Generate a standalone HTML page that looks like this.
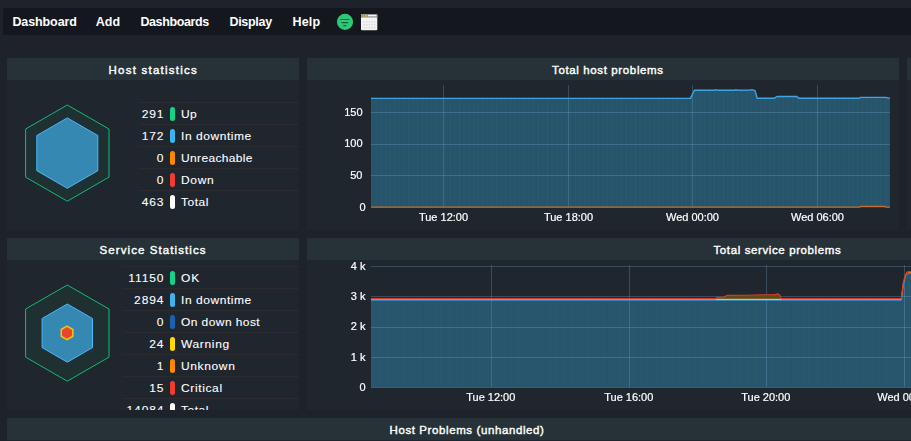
<!DOCTYPE html>
<html><head><meta charset="utf-8">
<style>
html,body{margin:0;padding:0;}
body{width:911px;height:441px;overflow:hidden;background:#1e222a;font-family:"Liberation Sans",sans-serif;color:#fff;position:relative;}
.abs{position:absolute;}
#nav{left:3px;top:8px;width:920px;height:27px;background:#14171d;border-radius:3px;}
#nav span{position:absolute;top:1px;margin-left:0.4px;line-height:27px;font-size:12.5px;font-weight:bold;white-space:nowrap;}
.panel{position:absolute;background:#20262e;overflow:hidden;}
.panel .hd{position:absolute;left:0;top:0;right:0;height:22px;background:#263238;}
.panel .hd span{position:absolute;top:0;line-height:25px;font-size:11.5px;font-weight:normal;-webkit-text-stroke:0.4px #fff;white-space:nowrap;}
.row{position:absolute;left:132px;right:0;height:22px;box-sizing:border-box;border-top:1px solid #2b2b30;font-size:12px;line-height:22px;letter-spacing:0.55px;}
.row .n{position:absolute;right:135.5px;top:0;text-align:right;}
.row .p{position:absolute;left:30.7px;top:4px;width:5.5px;height:14px;border-radius:2.75px;}
.row .l{position:absolute;left:42px;top:0;white-space:nowrap;}
.row .l,.row .n{transform:scaleY(0.92);transform-origin:0 15.5px;-webkit-text-stroke:0.1px #fff;}
.row .n{letter-spacing:0.9px;margin-right:-0.9px;}
.row.s{left:116px;}
.row.s .p{left:46.7px;}
.row.s .l{left:58px;}
svg text{font-family:"Liberation Sans",sans-serif;font-size:11px;fill:#fff;stroke:#fff;stroke-width:0.2px;}
svg.ch{will-change:transform;}
</style></head><body>
<div id="nav" class="abs">
<span style="left:9px;letter-spacing:-0.1px">Dashboard</span>
<span style="left:92.3px;letter-spacing:0.05px">Add</span>
<span style="left:137px;letter-spacing:-0.38px">Dashboards</span>
<span style="left:226px;letter-spacing:-0.28px">Display</span>
<span style="left:289px;letter-spacing:0.25px">Help</span>
<svg class="abs" style="left:333px;top:5px" width="18" height="18" viewBox="0 0 18 18"><circle cx="9" cy="8.9" r="8.05" fill="#2cc878"/><g stroke="#14603c" stroke-width="1.1" stroke-linecap="round"><line x1="4.7" x2="12.9" y1="6.5" y2="6.5"/><line x1="5.9" x2="11.8" y1="9.6" y2="9.6"/><line x1="7.8" x2="9.9" y1="12.6" y2="12.6"/></g></svg>
<svg class="abs" style="left:358px;top:6px" width="17" height="17" viewBox="0 0 17 17"><rect x="0" y="0" width="16.3" height="16.3" rx="1" fill="#f3f3f3"/><path d="M0,1 a1,1 0 0 1 1,-1 h14.3 a1,1 0 0 1 1,1 v2.5 h-16.3 z" fill="#8e8e8e"/><rect x="1.6" y="0.7" width="1.3" height="2" fill="#e6b422"/><rect x="3.9" y="0.7" width="2.3" height="2" fill="#e6b422"/><rect x="7" y="0.9" width="8.4" height="1.4" fill="#f4f4f4"/><g fill="#d6d6d6"><rect x="2.30" y="7.2" width="1.3" height="1.3"/><rect x="4.95" y="7.2" width="1.3" height="1.3"/><rect x="7.60" y="7.2" width="1.3" height="1.3"/><rect x="10.25" y="7.2" width="1.3" height="1.3"/><rect x="12.90" y="7.2" width="1.3" height="1.3"/><rect x="2.30" y="10.1" width="1.3" height="1.3"/><rect x="4.95" y="10.1" width="1.3" height="1.3"/><rect x="7.60" y="10.1" width="1.3" height="1.3"/><rect x="10.25" y="10.1" width="1.3" height="1.3"/><rect x="12.90" y="10.1" width="1.3" height="1.3"/><rect x="2.30" y="13" width="1.3" height="1.3"/><rect x="4.95" y="13" width="1.3" height="1.3"/><rect x="7.60" y="13" width="1.3" height="1.3"/><rect x="10.25" y="13" width="1.3" height="1.3"/><rect x="12.90" y="13" width="1.3" height="1.3"/></g></svg>
</div>

<!-- Host statistics -->
<div class="panel" style="left:7px;top:58px;width:292px;height:172px;">
<div class="hd"><span style="left:101.5px;letter-spacing:1.24px">Host statistics</span></div>
<svg class="abs" style="left:0;top:0" width="292" height="172">
<polygon points="60.3,47.0 102.0,71.0 102.0,119.1 60.3,143.2 18.6,119.1 18.6,71.0" fill="#1f3033" stroke="#16b877" stroke-width="1"/>
<polygon points="60.3,59.9 90.8,77.5 90.8,112.7 60.3,130.3 29.8,112.7 29.8,77.5" fill="#3488b2" stroke="#4bb8f5" stroke-width="1"/>
</svg>
<div class="row" style="top:44px"><span class="n">291</span><span class="p" style="background:#13d389"></span><span class="l" style="letter-spacing:0.3px">Up</span></div>
<div class="row" style="top:66px"><span class="n">172</span><span class="p" style="background:#3cb4f0"></span><span class="l" style="letter-spacing:0.55px">In downtime</span></div>
<div class="row" style="top:88px"><span class="n">0</span><span class="p" style="background:#ff8800"></span><span class="l" style="letter-spacing:0.35px">Unreachable</span></div>
<div class="row" style="top:110px"><span class="n">0</span><span class="p" style="background:#f53a30"></span><span class="l" style="letter-spacing:0.7px">Down</span></div>
<div class="row" style="top:132px"><span class="n">463</span><span class="p" style="background:#ffffff"></span><span class="l" style="letter-spacing:0.5px">Total</span></div>
</div>

<!-- Total host problems -->
<div class="panel" style="left:307px;top:58px;width:592px;height:172px;">
<div class="hd"><span style="left:245px;letter-spacing:0.63px">Total host problems</span></div>
<svg class="abs ch" style="left:0;top:0" width="592" height="172">
<defs><pattern id="st1" x="371" y="0" width="4.63" height="10" patternUnits="userSpaceOnUse"><rect x="0" y="0" width="1" height="10" fill="#fff" opacity="0.022"/></pattern></defs>
<g transform="translate(-307,-58)">
<path d="M371,98.4 L690.4,98.4 L694.4,90.3 L714,90.3 L715.5,89.7 L717,90.3 L734.5,90.3 L736,89.7 L737.5,90.3 L750,90.1 L751.7,89.6 L753.5,90.2 L755,90.6 L757.2,98.3 L774,98.3 L777,96.5 L796.4,96.4 L799.3,98.3 L858.5,98.3 L860.7,97.4 L885.7,97.4 L889.9,98.4 L889.9,207.5 L371,207.5 Z" fill="#26546b"/>
<path d="M371,98.4 L690.4,98.4 L694.4,90.3 L714,90.3 L715.5,89.7 L717,90.3 L734.5,90.3 L736,89.7 L737.5,90.3 L750,90.1 L751.7,89.6 L753.5,90.2 L755,90.6 L757.2,98.3 L774,98.3 L777,96.5 L796.4,96.4 L799.3,98.3 L858.5,98.3 L860.7,97.4 L885.7,97.4 L889.9,98.4 L889.9,207.5 L371,207.5 Z" fill="url(#st1)"/>
<g stroke="#78b0dc" stroke-width="1" stroke-opacity="0.28">
<line x1="371" x2="890" y1="112.5" y2="112.5"/><line x1="371" x2="890" y1="144.5" y2="144.5"/><line x1="371" x2="890" y1="175.5" y2="175.5"/>
<line x1="443.5" x2="443.5" y1="85" y2="207"/><line x1="568.5" x2="568.5" y1="85" y2="207"/><line x1="692.5" x2="692.5" y1="85" y2="207"/><line x1="817.5" x2="817.5" y1="85" y2="207"/>
</g>
<path d="M371,98.4 L690.4,98.4 L694.4,90.3 L714,90.3 L715.5,89.7 L717,90.3 L734.5,90.3 L736,89.7 L737.5,90.3 L750,90.1 L751.7,89.6 L753.5,90.2 L755,90.6 L757.2,98.3 L774,98.3 L777,96.5 L796.4,96.4 L799.3,98.3 L858.5,98.3 L860.7,97.4 L885.7,97.4 L889.9,98.4" fill="none" stroke="#3da6e3" stroke-width="1.4" stroke-linejoin="round"/>
<path d="M371,207.2 L859.5,207.2 L860.5,206.4 L885,206.4 L886,207.2 L889.9,207.2" fill="none" stroke="#c86e28" stroke-width="1.3"/>
<g text-anchor="end"><text x="362.5" y="115.8">150</text><text x="362.5" y="147.2">100</text><text x="362.5" y="178.8">50</text><text x="365.5" y="210.8">0</text></g>
<g text-anchor="middle"><text x="443.5" y="221">Tue 12:00</text><text x="568.5" y="221">Tue 18:00</text><text x="692.5" y="221">Wed 00:00</text><text x="817.5" y="221">Wed 06:00</text></g>
</g>
</svg>
</div>

<div class="panel" style="left:907px;top:58px;width:20px;height:172px;"><div class="hd"></div></div>

<!-- Service statistics -->
<div class="panel" style="left:7px;top:238px;width:292px;height:172px;">
<div class="hd"><span style="left:92.5px;letter-spacing:1.09px">Service Statistics</span></div>
<svg class="abs" style="left:0;top:0" width="292" height="172">
<polygon points="60.3,47.0 102.0,71.0 102.0,119.1 60.3,143.2 18.6,119.1 18.6,71.0" fill="#1f3033" stroke="#16b877" stroke-width="1"/>
<polygon points="60.3,66.0 85.5,80.5 85.5,109.6 60.3,124.2 35.1,109.6 35.1,80.5" fill="#3488b2" stroke="#4bb8f5" stroke-width="1"/>
<polygon points="60.0,87.3 66.6,91.1 66.6,98.7 60.0,102.5 53.5,98.7 53.5,91.1" fill="#f2c414"/>
<polygon points="60.0,89.1 65.1,92.0 65.1,97.8 60.0,100.7 55.0,97.8 55.0,92.0" fill="#e8482a"/>
</svg>
<div class="row s" style="top:28px"><span class="n">11150</span><span class="p" style="background:#13d389"></span><span class="l" style="letter-spacing:1.0px">OK</span></div>
<div class="row s" style="top:50px"><span class="n">2894</span><span class="p" style="background:#3cb4f0"></span><span class="l" style="letter-spacing:0.55px">In downtime</span></div>
<div class="row s" style="top:72px"><span class="n">0</span><span class="p" style="background:#1a62b0"></span><span class="l" style="letter-spacing:0.42px">On down host</span></div>
<div class="row s" style="top:94px"><span class="n">24</span><span class="p" style="background:#ffd703"></span><span class="l" style="letter-spacing:0.66px">Warning</span></div>
<div class="row s" style="top:116px"><span class="n">1</span><span class="p" style="background:#ff8800"></span><span class="l" style="letter-spacing:0.63px">Unknown</span></div>
<div class="row s" style="top:138px"><span class="n">15</span><span class="p" style="background:#f53a30"></span><span class="l" style="letter-spacing:0.63px">Critical</span></div>
<div class="row s" style="top:160px"><span class="n">14084</span><span class="p" style="background:#ffffff"></span><span class="l" style="letter-spacing:0.5px">Total</span></div>
</div>

<!-- Total service problems -->
<div class="panel" style="left:307px;top:238px;width:940px;height:172px;">
<div class="hd"><span style="left:406.5px;letter-spacing:0.61px">Total service problems</span></div>
<svg class="abs ch" style="left:0;top:0" width="620" height="172">
<defs><pattern id="st2" x="371" y="0" width="2.3" height="10" patternUnits="userSpaceOnUse"><rect x="0" y="0" width="1" height="10" fill="#fff" opacity="0.022"/></pattern></defs>
<g transform="translate(-307,-238)">
<path d="M371,300.9 L901.3,300.9 L903.4,284.3 L905.4,277.1 L907.5,274.1 L911,273.9 L911,387.5 L371,387.5 Z" fill="#26546b"/>
<path d="M371,300.9 L901.3,300.9 L903.4,284.3 L905.4,277.1 L907.5,274.1 L911,273.9 L911,387.5 L371,387.5 Z" fill="url(#st2)"/>
<g stroke="#78b0dc" stroke-width="1" stroke-opacity="0.28">
<line x1="371" x2="911" y1="266.5" y2="266.5"/><line x1="371" x2="911" y1="296.5" y2="296.5"/><line x1="371" x2="911" y1="327.5" y2="327.5"/><line x1="371" x2="911" y1="357.5" y2="357.5"/><line x1="371" x2="911" y1="387.5" y2="387.5"/>
<line x1="491.5" x2="491.5" y1="265" y2="387"/><line x1="629.5" x2="629.5" y1="265" y2="387"/><line x1="766.5" x2="766.5" y1="265" y2="387"/><line x1="904.5" x2="904.5" y1="265" y2="387"/>
</g>
<path d="M715.9,298.7 L717.6,297.2 L723.6,297.2 L726.9,295.4 L745,295.3 L762.6,294.7 L775,294.6 L778,293.9 L779.5,294.8 L781.2,298.7 Z" fill="#5f4a1e"/>
<path d="M371,300.5 L901.3,300.5 L903.4,283.9 L905.4,276.7 L907.5,273.7 L911,273.5" fill="none" stroke="#3da6e3" stroke-width="1" stroke-opacity="0.75"/>
<path d="M371,299.5 L901.3,299.5 L903.4,282.9 L905.4,275.7 L907.5,272.7 L911,272.5" fill="none" stroke="#f57a20" stroke-width="1"/>
<path d="M715.9,299.4 L781.2,299.4" fill="none" stroke="#f2c81a" stroke-width="1.1"/>
<path d="M371,298.5 L715.9,298.5 L717.6,297.2 L723.6,297.2 L726.9,295.4 L745,295.3 L762.6,294.7 L775,294.6 L778,293.9 L779.5,294.8 L781.2,298.5 L901.3,298.5 L903.4,281.9 L905.4,274.7 L907.5,271.7 L911,271.5" fill="none" stroke="#de3a2a" stroke-width="1.15" stroke-linejoin="round"/>
<g text-anchor="end"><text x="365.5" y="270.2">4 k</text><text x="365.5" y="300">3 k</text><text x="365.5" y="330.2">2 k</text><text x="365.5" y="360.5">1 k</text><text x="365.5" y="391">0</text></g>
<g text-anchor="middle"><text x="490.8" y="401">Tue 12:00</text><text x="628.8" y="401">Tue 16:00</text><text x="765.8" y="401">Tue 20:00</text><text x="903.8" y="401">Wed 00:00</text></g>
</g>
</svg>
</div>

<!-- Host problems -->
<div class="panel" style="left:7px;top:418px;width:920px;height:40px;">
<div class="hd"><span style="left:382.5px;letter-spacing:0.6px">Host Problems (unhandled)</span></div>
</div>
</body></html>
